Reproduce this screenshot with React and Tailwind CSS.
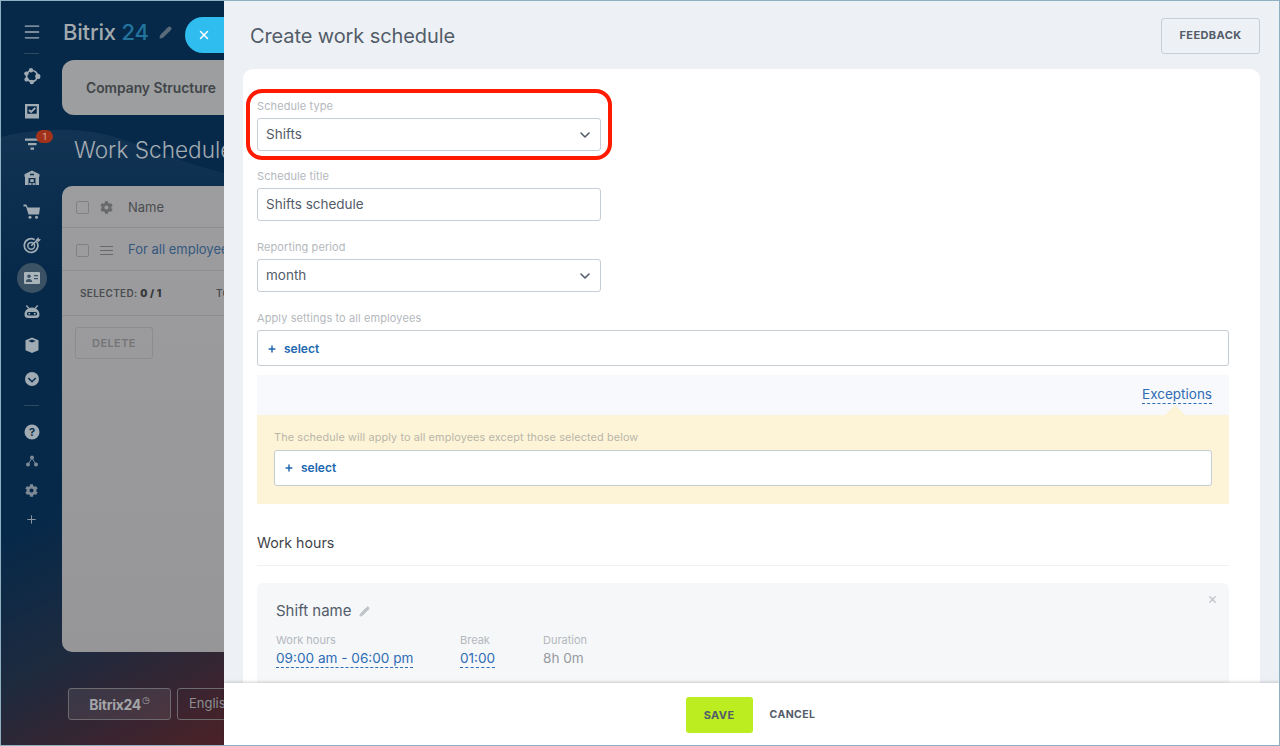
import { ChevronDown, Pencil, Plus, X, Menu } from 'lucide-react'
import { FaCog } from 'react-icons/fa'

const font = { fontFamily: 'Inter, "Liberation Sans", sans-serif' }

const NavIcon = ({ children, className = '' }) => (
  <div className={`h-[33.5px] flex items-center justify-center relative ${className}`}>
    <svg width="18" height="18" viewBox="0 0 18 18" fill="#a0abb3">{children}</svg>
  </div>
)

const Field = ({ label, children }) => (
  <div>
    <p className="text-[11px] leading-[14px] text-[#b4b8bd] mb-[5px] tracking-[0.1px]">{label}</p>
    {children}
  </div>
)

const SelectBox = ({ value, arrow }) => (
  <div className="w-[344px] h-[33px] border border-[#c6cdd3] rounded-[3px] bg-white flex items-center justify-between pl-[8px] pr-[7px] text-[13.5px] text-[#535c69]">
    <span>{value}</span>
    {arrow && <ChevronDown size={16} strokeWidth={2.4} className="text-[#535c69]" />}
  </div>
)

const AddBox = ({ className = '' }) => (
  <div className={`h-[36px] border border-[#c6cdd3] rounded-[3px] bg-white flex items-center pl-[9px] gap-[7px] text-[12px] font-semibold text-[#2067b0] ${className}`}>
    <Plus size={10} strokeWidth={3.5} />
    <span>select</span>
  </div>
)

const Sidebar = () => (
  <div className="w-[61px] shrink-0 flex flex-col items-stretch pt-[13px]">
    <div className="h-[36px] flex items-center justify-center">
      <Menu size={20} strokeWidth={1.6} className="text-[#a3aeb6]" />
    </div>
    <div className="mx-[23px] h-px bg-[#2d4a60] mt-[3px] mb-[5px]" />
    <NavIcon>
      <circle cx="9" cy="9" r="5.5" fill="none" stroke="#a0abb3" strokeWidth="1.6" />
      <circle cx="8" cy="3.2" r="2.2" /><circle cx="3.4" cy="6.6" r="2.2" /><circle cx="3.6" cy="12.4" r="2.2" /><circle cx="8.8" cy="15" r="2.2" /><circle cx="14.8" cy="9.4" r="2.6" />
    </NavIcon>
    <NavIcon className="mt-[1.5px]">
      <path fillRule="evenodd" d="M2 2h14v14.5H2z M4.3 4.3v7.5h9.400V4.300z" />
      <path d="M6 8l2.100 2L12.300 5.800" fill="none" stroke="#a0abb3" strokeWidth="1.900" />
    </NavIcon>
    <NavIcon>
      <path d="M2 3.500h14.500v2.300H2z M5 8h8.500v2.300H5z M7.500 12.500h3.500v2.300H7.500z" />
    </NavIcon>
    <NavIcon>
      <path fillRule="evenodd" d="M9 1.500l7.500 3.800v2.400H16V16H2V7.700h-.5V5.300z M5.500 9v7h7V9z M7 4.800h4v1.500H7z" />
      <path d="M7.300 10.300h3.400v2.700H7.300z M6.200 14h2.200v2H6.200z M9.600 14h2.200v2H9.600z" />
    </NavIcon>
    <NavIcon>
      <path d="M.500 2.500h2.800l1.500 3H17l-1 7H5.500L3 4.500H.500z" />
      <circle cx="7" cy="15.300" r="1.500" /><circle cx="13.500" cy="15.300" r="1.500" />
    </NavIcon>
    <NavIcon>
      <path d="M13.500 5.400a6.800 6.800 0 11-1.900-1.700" fill="none" stroke="#a0abb3" strokeWidth="1.700" />
      <circle cx="8.200" cy="9.800" r="3.400" fill="none" stroke="#a0abb3" strokeWidth="1.500" />
      <path d="M8.200 9.800L14.500 3.700" stroke="#a0abb3" strokeWidth="1.600" />
      <path d="M13 3.700l2.500-2.700.4 2.100 2.100.4-2.700 2.500z" />
    </NavIcon>
    <div className="h-[33.5px] flex items-center justify-center">
      <div className="w-[30px] h-[30px] rounded-full bg-[#3b5264] flex items-center justify-center">
        <svg width="16" height="12" viewBox="0 0 16 12" fill="#a9b3ba">
          <path fillRule="evenodd" d="M0 1a1 1 0 011-1h14a1 1 0 011 1v10a1 1 0 01-1 1H1a1 1 0 01-1-1z M10 3v1.200h4V3z M10 6v1.200h4V6z" />
          <circle cx="5" cy="4.300" r="1.800" fill="#3b5264" />
          <path d="M1.800 10c0-2 1.400-3 3.200-3s3.200 1 3.200 3z" fill="#3b5264" />
        </svg>
      </div>
    </div>
    <NavIcon>
      <path d="M3.300 2.500l2.700 3M14.700 2.500l-2.700 3" stroke="#a0abb3" strokeWidth="1.300" />
      <path fillRule="evenodd" d="M1.500 11.500C1.500 7.500 4.800 4.500 9 4.500s7.500 3 7.500 7c0 2.500-1.500 3.500-3.500 3.500H5c-2 0-3.500-1-3.500-3.500z M5.500 9a1.700 1.700 0 000 3.400h7a1.700 1.700 0 000-3.400z" />
      <circle cx="6.300" cy="10.700" r="1" /><circle cx="11.700" cy="10.700" r="1" />
    </NavIcon>
    <NavIcon>
      <path fillRule="evenodd" d="M9 1.500l6.500 2.700v10.100L9 17l-6.500-2.700V4.200z M9 3.400L5.300 5 9 6.600 12.700 5z" />
    </NavIcon>
    <NavIcon>
      <path fillRule="evenodd" d="M9 2a7 7 0 100 14A7 7 0 009 2z M5.800 7.500L9 10.700l3.200-3.200 1 1L9 12.800 4.800 8.500z" />
    </NavIcon>
    <div className="mx-[23px] h-px bg-[#2d4a60] mt-[9px] mb-[9px]" />
    <NavIcon className="!h-[33px] mt-[0.5px]">
      <circle cx="9" cy="9" r="7.500" />
      <text x="9" y="13" textAnchor="middle" fontSize="11" fontWeight="700" fill="#0b2d49">?</text>
    </NavIcon>
    <div className="h-[26px] flex items-center justify-center">
      <svg width="12" height="12" viewBox="0 0 12 12" fill="#7d8a95">
        <circle cx="6" cy="2.500" r="2" /><circle cx="2" cy="9.500" r="2" /><circle cx="10" cy="9.500" r="2" />
        <path d="M6 3L2 9.500M6 3l4 6.500" stroke="#7d8a95" strokeWidth="1" />
      </svg>
    </div>
    <div className="h-[32px] flex items-center justify-center">
      <FaCog size={13} className="text-[#7d8a95]" />
    </div>
    <div className="h-[26px] flex items-center justify-center">
      <Plus size={13} strokeWidth={1.8} className="text-[#8d99a3]" />
    </div>
  </div>
)

const Background = () => (
  <div className="w-[223px] shrink-0 relative overflow-hidden bg-[linear-gradient(152deg,#06294a_0%,#06294a_62%,#1e2a3e_80%,#4c2127_100%)]">
    {/* wave */}
    <svg className="absolute left-0 top-[120px]" width="223" height="160" viewBox="0 0 223 160">
      <defs>
        <linearGradient id="wave" x1="0" y1="0" x2="0" y2="1">
          <stop offset="0" stopColor="#ffffff" stopOpacity="0.05" />
          <stop offset="1" stopColor="#ffffff" stopOpacity="0" />
        </linearGradient>
      </defs>
      <path d="M0 16C30 8 80 4 120 18S190 44 223 52V160H0z" fill="url(#wave)" />
    </svg>

    <div className="relative flex h-full">
      <Sidebar />
      <div className="w-[400px] shrink-0 flex flex-col">
        <div className="h-[59px] flex items-center pt-[3px] pl-[1px] gap-[10px]">
          <span className="text-[22px] font-medium text-[#a3a9ad] tracking-[-0.2px]">Bitrix <span className="text-[#22749c]">24</span></span>
          <Pencil size={13} className="text-[#5a6c79]" fill="#5a6c79" />
        </div>
        <div className="w-[300px] h-[55px] rounded-tl-xl rounded-bl-xl bg-[#9c9ea0] flex items-center pl-[24px] pt-[2px] text-[13.8px] font-semibold text-[#414548]">
          Company Structure
        </div>
        <div className="h-[71px] flex items-center pl-[12px] pb-[2px] text-[22.6px] font-light text-[#a3abb1]">
          Work Schedule
        </div>
        <div className="h-[466px] rounded-[10px] bg-[linear-gradient(180deg,#9d9d9f_0%,#969698_100%)] text-[#4a4d50]">
          <div className="h-[42px] flex items-center pl-[14px] pt-[2px] border-b border-[#8c8e90] text-[13px]">
            <span className="w-[13px] h-[13px] border border-[#7f8285] rounded-[2px] mr-[11px]" />
            <FaCog size={13} className="text-[#68696b] mr-[15px]" />
            <span>Name</span>
          </div>
          <div className="h-[43px] flex items-center pl-[14px] pt-[2px] border-b border-[#8c8e90] text-[13px]">
            <span className="w-[13px] h-[13px] border border-[#7f8285] rounded-[2px] mr-[11px]" />
            <span className="w-[13px] flex flex-col gap-[3px] mr-[15px]">
              <i className="h-px bg-[#68696b]" /><i className="h-px bg-[#68696b]" /><i className="h-px bg-[#68696b]" />
            </span>
            <span className="text-[#34587f]">For all employees</span>
          </div>
          <div className="h-[45px] flex items-center pl-[18px] pt-[1px] border-b border-[#8c8e90] text-[10px] font-semibold tracking-[0.3px]">
            <span className="w-[136px]">SELECTED: <b className="text-[#37393b]">0 / 1</b></span>
            <span>TOTAL</span>
          </div>
          <div className="pl-[13px] pt-[11px]">
            <div className="w-[78px] h-[32px] border border-[#8a8c8e] rounded-[3px] flex items-center justify-center pt-[1px] text-[11px] font-semibold tracking-[0.4px] text-[#737577]">
              DELETE
            </div>
          </div>
        </div>
        <div className="flex gap-[6px] pl-[6px] pt-[36px]">
          <div className="w-[103px] h-[32px] rounded-[3px] border border-[#6d6a70] bg-[#ffffff14] flex items-center justify-center text-[14px] font-bold text-[#a3a5a8] tracking-[-0.3px]">
            Bitrix24<span className="text-[9px] font-normal relative -top-[4px] ml-[1px]">◷</span>
          </div>
          <div className="w-[110px] h-[32px] rounded-[3px] border border-[#6d6a70] flex items-center pl-[11px] text-[13px] text-[#8d8f92]">
            English
          </div>
        </div>
      </div>
    </div>

    {/* unread badge */}
    <span className="absolute left-[35px] top-[129px] w-[17px] h-[13px] rounded-full bg-[#a3321b] text-[9px] leading-[13px] text-center text-[#d9b0a6]">1</span>
    {/* close tab */}
    <div className="absolute left-[184px] top-[16px] w-[45px] h-[36px] rounded-l-full bg-[#2fbcee] flex items-center pl-[12px]">
      <X size={14} strokeWidth={2.5} className="text-white" />
    </div>
  </div>
)

const App = () => (
  <div className="w-[1280px] h-[746px] flex overflow-hidden border border-[#8fb0c0] relative" style={font}>
    <Background />
    <div className="flex-1 min-w-0 flex flex-col bg-[#edf1f5] relative">
      <div className="h-[68px] shrink-0 flex items-center justify-between pl-[26px] pr-[19px] pt-[1px]">
        <h1 className="text-[20px] text-[#535c69] tracking-[-0.1px]">Create work schedule</h1>
        <div className="w-[99px] h-[36px] border border-[#c6cdd3] rounded-[3px] flex items-center justify-center text-[11px] font-bold tracking-[0.4px] text-[#535c69]">
          FEEDBACK
        </div>
      </div>

      <div className="flex-1 min-h-0 overflow-hidden pl-[19px] pr-[19px]">
        <div className="bg-white rounded-t-[10px] pl-[14px] pr-[31px] pt-[30px] h-[700px]">
          <div className="flex flex-col gap-[19px]">
            <div className="-mb-[1px]"><Field label="Schedule type"><SelectBox value="Shifts" arrow /></Field></div>
            <Field label="Schedule title"><SelectBox value="Shifts schedule" /></Field>
            <Field label="Reporting period"><SelectBox value="month" arrow /></Field>
            <Field label="Apply settings to all employees"><AddBox className="pt-[1px]" /></Field>
          </div>

          <div className="mt-[9px] h-[40px] bg-[#f8f9fc] flex items-center justify-end pr-[17px]">
            <span className="text-[13.5px] text-[#2f6db5] border-b border-dashed border-[#2f6db5] leading-[17px]">Exceptions</span>
          </div>
          <div className="h-[89px] bg-[#fdf4d8] px-[17px] pt-[15px] relative">
            <span className="absolute right-[44px] -top-[10px] w-0 h-0 border-x-[10px] border-x-transparent border-b-[10px] border-b-[#fdf4d8]" />
            <p className="text-[10.9px] leading-[14px] text-[#b9b6a8] mb-[6px] tracking-[0.1px]">The schedule will apply to all employees except those selected below</p>
            <AddBox />
          </div>

          <h2 className="mt-[30px] text-[14.2px] leading-[18px] text-[#3f4448]">Work hours</h2>
          <div className="mt-[13px] h-px bg-[#f0f1f3]" />

          <div className="mt-[17px] h-[130px] rounded-[6px] bg-[#f5f7f9] pl-[19px] pt-[19px] relative">
            <X size={11} strokeWidth={3} className="absolute right-[11px] top-[11px] text-[#c0c4c8]" />
            <div className="flex items-center gap-[8px] text-[15px] leading-[18px] text-[#535c69]">
              Shift name
              <Pencil size={11} className="text-[#c0c4c8]" fill="#c0c4c8" />
            </div>
            <div className="flex mt-[14px]">
              <div className="w-[184px]">
                <p className="text-[11px] leading-[13px] text-[#b4b8bd] mb-[-2px]">Work hours</p>
                <span className="inline-block text-[13.6px] leading-[18px] text-[#2f6db5] border-b border-dashed border-[#2f6db5]">09:00 am - 06:00 pm</span>
              </div>
              <div className="w-[83px]">
                <p className="text-[11px] leading-[13px] text-[#b4b8bd] mb-[-2px]">Break</p>
                <span className="inline-block text-[13.6px] leading-[18px] text-[#2f6db5] border-b border-dashed border-[#2f6db5]">01:00</span>
              </div>
              <div>
                <p className="text-[11px] leading-[13px] text-[#b4b8bd] mb-[-2px]">Duration</p>
                <span className="inline-block text-[13.6px] leading-[18px] text-[#969a9e]">8h 0m</span>
              </div>
            </div>
          </div>
        </div>
      </div>

      <div className="h-[62px] shrink-0 bg-white shadow-[0_-1px_3px_rgba(0,0,0,0.18)] flex items-center justify-center gap-[17px] relative pt-[2px] pr-[2px]">
        <div className="w-[67px] h-[36px] rounded-[3px] bg-[#bbed21] flex items-center justify-center text-[11px] font-bold tracking-[0.4px] text-[#535c69]">SAVE</div>
        <span className="text-[10.5px] font-bold tracking-[0.4px] text-[#535c69]">CANCEL</span>
      </div>

      {/* red highlight around the first field */}
      <div className="absolute left-[22px] top-[88px] w-[366px] h-[71px] border-[4px] border-[#ff1a00] rounded-[16px]" />
    </div>
  </div>
)

export default App
